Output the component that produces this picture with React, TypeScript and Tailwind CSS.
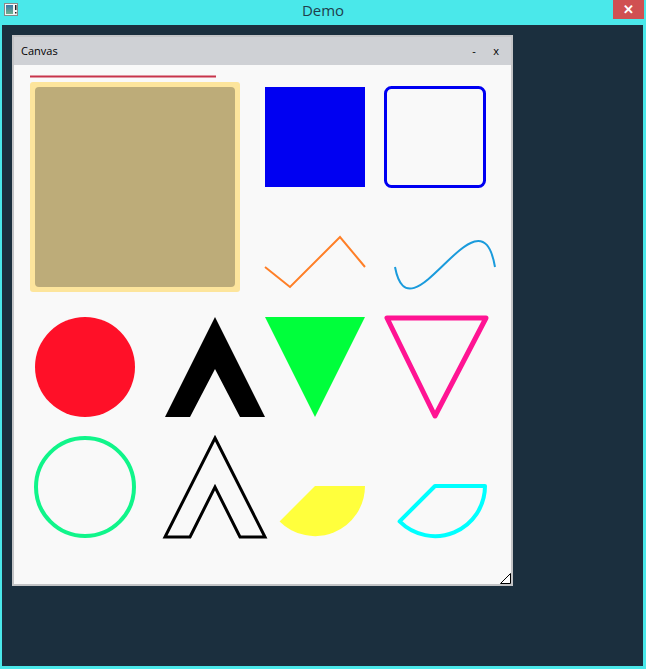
import React from "react";

const font = { fontFamily: '"Open Sans", "Noto Sans", sans-serif' };

function AppIcon() {
  return (
    <svg width="15" height="13" viewBox="0 0 15 13" className="block">
      <rect x="0.5" y="0.5" width="13" height="12" fill="#f4f4f4" stroke="#8a8a8a" />
      <defs>
        <linearGradient id="ig" x1="0" y1="0" x2="0" y2="1">
          <stop offset="0" stopColor="#3a78a8" />
          <stop offset="1" stopColor="#6fb08c" />
        </linearGradient>
      </defs>
      <rect x="2" y="2" width="7" height="9" fill="url(#ig)" />
      <rect x="11" y="2" width="1.5" height="5" fill="#222" />
      <rect x="11" y="9" width="1.5" height="1.5" fill="#222" />
    </svg>
  );
}

function Drawing() {
  return (
    <svg width="497" height="519" viewBox="0 0 497 519" className="block">
      <line x1="16" y1="11.5" x2="202" y2="11.5" stroke="#c8344b" strokeWidth="2" />
      <rect x="16" y="17" width="210" height="210" rx="3" fill="#fde59c" />
      <rect x="21" y="22" width="200" height="200" rx="4" fill="#bdac79" />

      <rect x="251" y="22" width="100" height="100" fill="#0000f2" />
      <rect x="371.5" y="22.5" width="99" height="99" rx="6" fill="none" stroke="#0000f2" strokeWidth="3" />

      <polyline points="251,202 276,222 326,172 351,202" fill="none" stroke="#ff7f27" strokeWidth="2" />
      <path d="M381 202 C396 280, 466 115, 481 202" fill="none" stroke="#1a9bdc" strokeWidth="2" />

      <circle cx="71" cy="302" r="50" fill="#ff1028" />
      <polygon points="201,252 251,352 226,352 201,304 176,352 151,352" fill="#000" />
      <polygon points="251,252 351,252 301,352" fill="#00ff3b" />
      <polygon points="373,253 472,253 421,351" fill="none" stroke="#ff1493" strokeWidth="5" strokeLinejoin="round" />

      <circle cx="71" cy="422" r="49" fill="none" stroke="#10f58a" strokeWidth="4" />
      <polygon points="201,373 251,472 226,472 201,422 176,472 151,472" fill="none" stroke="#000" strokeWidth="3" />
      <path d="M301 421 L351 421 A50 50 0 0 1 265.6 456.4 Z" fill="#ffff3c" />
      <path d="M421 421 L471 421 A50 50 0 0 1 385.6 456.4 Z" fill="none" stroke="#00ffff" strokeWidth="4" strokeLinejoin="round" />
    </svg>
  );
}

export default function App() {
  return (
    <div className="w-[646px] h-[669px] bg-[#4ae8ea] flex flex-col overflow-hidden" style={font}>
      <div className="h-[25px] relative flex items-center justify-center shrink-0">
        <div className="absolute left-[4px] top-[3px]">
          <AppIcon />
        </div>
        <span className="text-[15px] text-[#1f3e4c] leading-none -mt-[4px]">Demo</span>
        <div className="absolute right-[2px] top-0 w-[31px] h-[19px] bg-[#d05052] flex items-center justify-center">
          <span className="text-white text-[13px] font-bold leading-none">✕</span>
        </div>
      </div>

      <div className="ml-[2px] w-[641px] h-[641px] bg-[#1b2f3e] pt-[10px] pl-[10px]">
        <div className="w-[501px] h-[551px] border-2 border-[#c3c4c6] flex flex-col">
          <div className="h-[28px] bg-[#cfd1d5] flex items-center pl-[7px] pr-[12px] text-[11px] text-black shrink-0">
            <span className="flex-1">Canvas</span>
            <span className="w-[21px]">-</span>
            <span>x</span>
          </div>
          <div className="flex-1 bg-[#f9f9f9] relative">
            <Drawing />
            <svg width="11" height="11" viewBox="0 0 11 11" className="absolute right-0 bottom-0">
              <polygon points="0.5,10.5 10.5,0.5 10.5,10.5" fill="#fff" stroke="#000" strokeWidth="1" />
            </svg>
          </div>
        </div>
      </div>
    </div>
  );
}
